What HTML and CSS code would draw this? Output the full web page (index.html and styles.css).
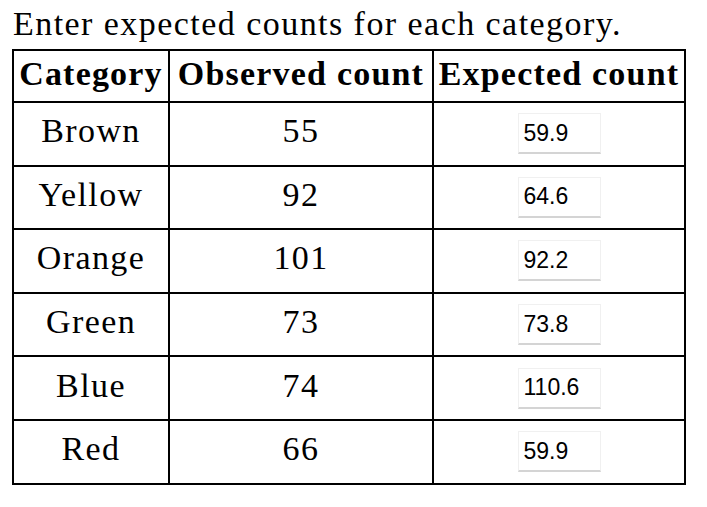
FILE: index.html
```html
<!DOCTYPE html>
<html lang="en">
<head>
    <meta charset="UTF-8">
    <meta name="viewport" content="width=device-width, initial-scale=1.0">
    <title>Expected counts</title>
    <link rel="stylesheet" href="styles.css">
</head>
<body>
    <p class="prompt">Enter expected counts for each category.</p>
    <table class="counts">
        <colgroup>
            <col class="col-cat">
            <col class="col-obs">
            <col class="col-exp">
        </colgroup>
        <thead>
            <tr>
                <th>Category</th>
                <th>Observed count</th>
                <th>Expected count</th>
            </tr>
        </thead>
        <tbody>
            <tr><td>Brown</td><td>55</td><td><input type="text" value="59.9"></td></tr>
            <tr><td>Yellow</td><td>92</td><td><input type="text" value="64.6"></td></tr>
            <tr><td>Orange</td><td>101</td><td><input type="text" value="92.2"></td></tr>
            <tr><td>Green</td><td>73</td><td><input type="text" value="73.8"></td></tr>
            <tr><td>Blue</td><td>74</td><td><input type="text" value="110.6"></td></tr>
            <tr><td>Red</td><td>66</td><td><input type="text" value="59.9"></td></tr>
        </tbody>
    </table>
</body>
</html>
```

FILE: styles.css
```css
body {
    font-family: 'Liberation Serif', serif;
    background-color: #fff;
    color: #000;
    margin: 0;
    padding: 0 12px;
}
.prompt {
    font-size: 34px;
    line-height: 38px;
    letter-spacing: 1.45px;
    margin: 5px 0 6px 1px;
}
.counts {
    border-collapse: collapse;
    table-layout: fixed;
    width: 672px;
    font-size: 34px;
    letter-spacing: 1.4px;
}
.col-cat { width: 156px; }
.col-obs { width: 264px; }
.col-exp { width: 252px; }
.counts th, .counts td {
    border: 2px solid #000;
    text-align: center;
    padding: 0 0 5px;
}
.counts th {
    height: 45px;
    font-weight: bold;
    letter-spacing: 1.2px;
}
.counts td {
    height: 56.6px;
}
.counts input {
    width: 83px;
    height: 41px;
    box-sizing: border-box;
    font-family: 'Liberation Sans', sans-serif;
    font-size: 23px;
    letter-spacing: 0;
    padding: 0 0 0 5px;
    margin-top: 5px;
    border: 1px solid #f0f0f0;
    border-bottom: 2px solid #d4d4d4;
    background: #fff;
    color: #000;
    vertical-align: middle;
}
```
